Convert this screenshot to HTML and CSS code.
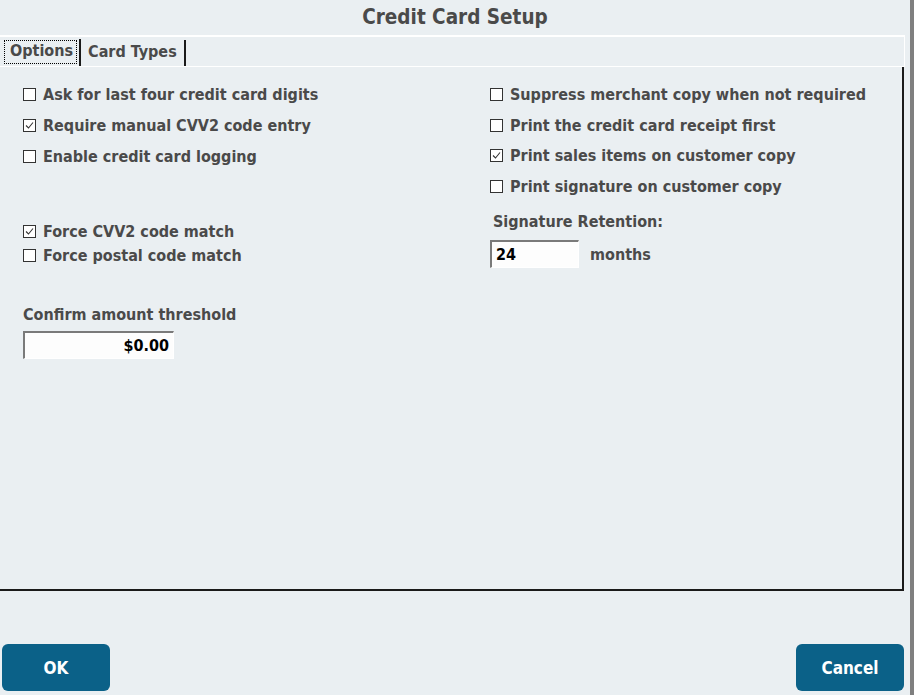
FILE: index.html
```html
<!DOCTYPE html>
<html>
<head>
<meta charset="utf-8">
<link rel="stylesheet" href="styles.css">
</head>
<body>
<div class="window">
  <div class="main">
    <div class="title">Credit Card Setup</div>
    <div class="tabstrip">
      <div class="tab active"><span class="focus">Options</span></div>
      <div class="tab">Card Types</div>
    </div>
    <div class="panel">
      <div class="col left">
        <label class="check"><span class="box"></span>Ask for last four credit card digits</label>
        <label class="check"><span class="box checked"><svg viewBox="0 0 13 13" width="13" height="13"><path d="M3 6.5 L5.5 9 L10 3.5" fill="none" stroke="#333" stroke-width="1.1"/></svg></span>Require manual CVV2 code entry</label>
        <label class="check"><span class="box"></span>Enable credit card logging</label>
        <div class="group2">
          <label class="check tight"><span class="box checked"><svg viewBox="0 0 13 13" width="13" height="13"><path d="M3 6.5 L5.5 9 L10 3.5" fill="none" stroke="#333" stroke-width="1.1"/></svg></span>Force CVV2 code match</label>
          <label class="check tight"><span class="box"></span>Force postal code match</label>
        </div>
        <div class="field">
          <div class="flabel">Confirm amount threshold</div>
          <div class="input amount">$0.00</div>
        </div>
      </div>
      <div class="col right">
        <label class="check"><span class="box"></span>Suppress merchant copy when not required</label>
        <label class="check"><span class="box"></span>Print the credit card receipt first</label>
        <label class="check"><span class="box checked"><svg viewBox="0 0 13 13" width="13" height="13"><path d="M3 6.5 L5.5 9 L10 3.5" fill="none" stroke="#333" stroke-width="1.1"/></svg></span>Print sales items on customer copy</label>
        <label class="check"><span class="box"></span>Print signature on customer copy</label>
        <div class="flabel sig">Signature Retention:</div>
        <div class="row">
          <div class="input months">24</div>
          <span class="unit">months</span>
        </div>
      </div>
    </div>
    <div class="footer">
      <button class="btn">OK</button>
      <button class="btn">Cancel</button>
    </div>
  </div>
  <div class="edge"></div>
</div>
</body>
</html>
```
FILE: styles.css
```css
html, body {
  margin: 0;
  padding: 0;
  background: #eaeff2;
}
body {
  font-family: "DejaVu Sans Condensed", "DejaVu Sans", sans-serif;
  font-weight: bold;
  color: #4a4a4a;
}
.window {
  display: flex;
  width: 914px;
  height: 695px;
}
.main {
  flex: 1;
  display: flex;
  flex-direction: column;
}
.edge {
  width: 4px;
  background: #7f7f7f;
}
.title {
  height: 35px;
  line-height: 35px;
  text-align: center;
  font-size: 20.5px;
  color: #4a4a4a;
}
.tabstrip {
  height: 29px;
  margin-right: 5px;
  border-top: 2px solid #ffffff;
  border-right: 1px solid #ffffff;
  border-bottom: 1px solid #ffffff;
  display: flex;
  align-items: flex-end;
  font-size: 16px;
}
.tab {
  height: 26px;
  line-height: 23px;
  padding: 0 7px 0 7px;
  border-right: 2px solid #1a1a1a;
}
.tab.active {
  padding: 0 2px 0 4px;
  height: 27px;
}
.focus {
  display: inline-block;
  height: 22px;
  line-height: 20px;
  padding: 0 3px 0 5px;
  border: 1px dotted #000;
  margin-top: 1px;
}
.panel {
  height: 522px;
  margin-right: 6px;
  border-right: 2px solid #1a1a1a;
  border-bottom: 2px solid #1a1a1a;
  display: flex;
  font-size: 16px;
}
.col {
  display: flex;
  flex-direction: column;
}
.col.left {
  width: 490px;
  padding: 12px 0 0 23px;
  box-sizing: border-box;
}
.col.right {
  padding: 12px 0 0 0;
}
.check {
  display: flex;
  align-items: center;
  height: 31px;
  white-space: nowrap;
}
.col.right .check { height: 30.7px; }
.check.tight { height: 24px; }
.box {
  width: 11px;
  height: 11px;
  border: 1px solid #333;
  background: #fff;
  margin-right: 7px;
  flex: none;
  position: relative;
}
.box svg {
  position: absolute;
  left: -1px;
  top: -1px;
}
.group2 {
  margin-top: 47px;
}
.field {
  margin-top: 37px;
}
.flabel {
  height: 22px;
  line-height: 22px;
}
.input {
  background: #fdfdfd;
  border-top: 2px solid #7a7a7a;
  border-left: 2px solid #7a7a7a;
  border-bottom: 1px solid #ffffff;
  border-right: 1px solid #ffffff;
  color: #000;
  box-sizing: border-box;
  height: 28px;
  line-height: 25px;
}
.amount {
  width: 151px;
  text-align: right;
  padding-right: 4px;
  margin-top: 5px;
}
.sig {
  margin-top: 9px;
  margin-left: 3px;
}
.row {
  display: flex;
  align-items: center;
  margin-top: 7px;
}
.months {
  width: 89px;
  padding-left: 4px;
}
.unit {
  margin-left: 11px;
  padding-top: 2px;
}
.footer {
  flex: 1;
  display: flex;
  justify-content: space-between;
  align-items: flex-end;
  padding: 0 6px 4px 2px;
}
.btn {
  width: 108px;
  height: 47px;
  border: none;
  border-radius: 6px;
  background: #0b6188;
  color: #fff;
  font-family: "DejaVu Sans Condensed", "DejaVu Sans", sans-serif;
  font-weight: bold;
  font-size: 17px;
}
```
